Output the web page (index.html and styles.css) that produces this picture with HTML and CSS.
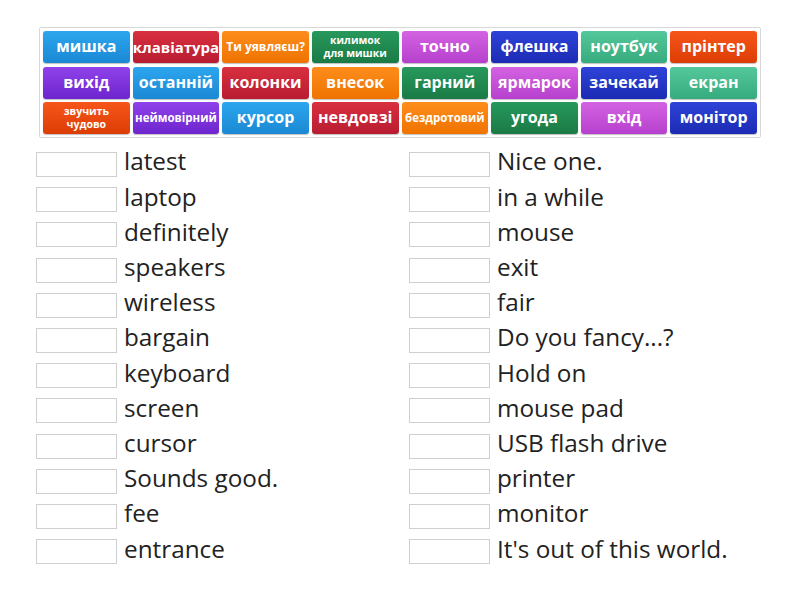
FILE: index.html
```html
<!DOCTYPE html>
<html lang="uk">
<head>
    <meta charset="UTF-8">
    <meta name="viewport" content="width=device-width, initial-scale=1.0">
    <title>Match up</title>
    <link rel="stylesheet" href="styles.css">
</head>
<body>
    <div class="tiles">
        <div class="tile blue">мишка</div>
        <div class="tile red md">клавіатура</div>
        <div class="tile orange sm wide">Ти уявляєш?</div>
        <div class="tile green xs">килимок<br>для мишки</div>
        <div class="tile pink">точно</div>
        <div class="tile navy">флешка</div>
        <div class="tile teal">ноутбук</div>
        <div class="tile flame">прінтер</div>

        <div class="tile violet">вихід</div>
        <div class="tile blue">останній</div>
        <div class="tile red">колонки</div>
        <div class="tile orange">внесок</div>
        <div class="tile green">гарний</div>
        <div class="tile pink">ярмарок</div>
        <div class="tile navy">зачекай</div>
        <div class="tile teal">екран</div>

        <div class="tile flame xs">звучить<br>чудово</div>
        <div class="tile violet sm">неймовірний</div>
        <div class="tile blue">курсор</div>
        <div class="tile red">невдовзі</div>
        <div class="tile orange sm">бездротовий</div>
        <div class="tile green">угода</div>
        <div class="tile pink">вхід</div>
        <div class="tile navy">монітор</div>
    </div>

    <div class="answers">
        <div class="column">
            <div class="row"><span class="slot"></span><span class="word">latest</span></div>
            <div class="row"><span class="slot"></span><span class="word">laptop</span></div>
            <div class="row"><span class="slot"></span><span class="word">definitely</span></div>
            <div class="row"><span class="slot"></span><span class="word">speakers</span></div>
            <div class="row"><span class="slot"></span><span class="word">wireless</span></div>
            <div class="row"><span class="slot"></span><span class="word">bargain</span></div>
            <div class="row"><span class="slot"></span><span class="word">keyboard</span></div>
            <div class="row"><span class="slot"></span><span class="word">screen</span></div>
            <div class="row"><span class="slot"></span><span class="word">cursor</span></div>
            <div class="row"><span class="slot"></span><span class="word">Sounds good.</span></div>
            <div class="row"><span class="slot"></span><span class="word">fee</span></div>
            <div class="row"><span class="slot"></span><span class="word">entrance</span></div>
        </div>
        <div class="column">
            <div class="row"><span class="slot"></span><span class="word">Nice one.</span></div>
            <div class="row"><span class="slot"></span><span class="word">in a while</span></div>
            <div class="row"><span class="slot"></span><span class="word">mouse</span></div>
            <div class="row"><span class="slot"></span><span class="word">exit</span></div>
            <div class="row"><span class="slot"></span><span class="word">fair</span></div>
            <div class="row"><span class="slot"></span><span class="word">Do you fancy...?</span></div>
            <div class="row"><span class="slot"></span><span class="word">Hold on</span></div>
            <div class="row"><span class="slot"></span><span class="word">mouse pad</span></div>
            <div class="row"><span class="slot"></span><span class="word">USB flash drive</span></div>
            <div class="row"><span class="slot"></span><span class="word">printer</span></div>
            <div class="row"><span class="slot"></span><span class="word">monitor</span></div>
            <div class="row"><span class="slot"></span><span class="word">It's out of this world.</span></div>
        </div>
    </div>
</body>
</html>
```

FILE: styles.css
```css
body {
    margin: 0;
    padding: 27px 0 0 0;
    font-family: "Open Sans", "Noto Sans", sans-serif;
    background: #fff;
    color: #222;
}
.tiles {
    width: 714px;
    margin: 0 auto;
    padding: 3px;
    border: 1px solid #d8d8d8;
    border-radius: 2px;
    display: grid;
    grid-template-columns: repeat(8, 1fr);
    grid-auto-rows: 32px;
    column-gap: 3px;
    row-gap: 3.5px;
}
.tile {
    display: flex;
    align-items: center;
    justify-content: center;
    text-align: center;
    color: #fff;
    font-weight: 700;
    font-size: 16px;
    line-height: 1.2;
    border-radius: 3px;
    box-shadow: 0 1px 1px rgba(0, 0, 0, 0.25);
    white-space: nowrap;
    overflow: hidden;
}
.md { font-size: 15px; }
.sm { font-size: 11.5px; }
.wide { font-size: 12px; }
.xs { font-size: 10.5px; line-height: 13px; }

.blue   { background: linear-gradient(#2ca6ee, #1b88d4); }
.red    { background: linear-gradient(#d8303f, #b81c31); }
.orange { background: linear-gradient(#fd8d1c, #ef7300); }
.green  { background: linear-gradient(#27995c, #1a7a45); }
.pink   { background: linear-gradient(#d463e2, #b640cd); }
.navy   { background: linear-gradient(#2d43d8, #1c2bb3); }
.teal   { background: linear-gradient(#55c89b, #36ab7d); }
.flame  { background: linear-gradient(#f7561a, #dc3d04); }
.violet { background: linear-gradient(#8f42ea, #6e25cd); }

.answers {
    display: grid;
    grid-template-columns: 373px 373px;
    padding: 9px 0 0 36px;
}
.row {
    display: flex;
    align-items: center;
    height: 35.2px;
}
.slot {
    width: 79px;
    height: 23px;
    border: 1px solid #cfcfcf;
    background: #fff;
    flex: none;
}
.word {
    margin-left: 7px;
    font-size: 24.3px;
    line-height: 1;
    position: relative;
    top: -3px;
}
```
